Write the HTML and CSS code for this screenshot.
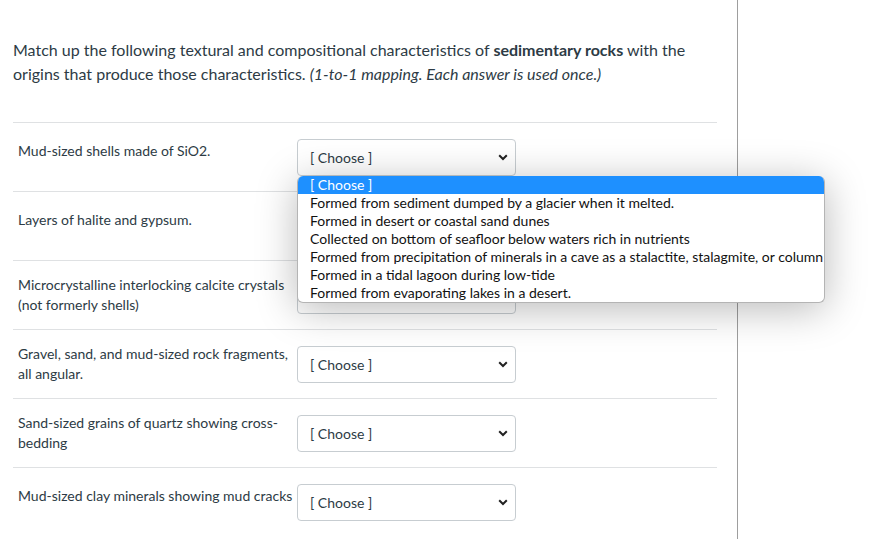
FILE: index.html
```html
<!DOCTYPE html>
<html lang="en">
<head>
    <meta charset="UTF-8">
    <meta name="viewport" content="width=device-width, initial-scale=1.0">
    <title>Matching Question</title>
    <link rel="stylesheet" href="styles.css">
</head>
<body>
    <div class="page">
        <div class="question">
            <p class="prompt">Match up the following textural and compositional characteristics of <strong>sedimentary rocks</strong> with the origins that produce those characteristics. <em>(1-to-1 mapping. Each answer is used once.)</em></p>
            <div class="answers">
                <div class="row">
                    <div class="label">Mud-sized shells made of SiO2.</div>
                    <div class="select-wrap">
                        <div class="select">
                            <span>[ Choose ]</span>
                            <svg class="chevron" width="10" height="7" viewBox="0 0 10 7"><polyline points="1.2,1.3 5,5 8.8,1.3" fill="none" stroke="#222" stroke-width="2"/></svg>
                        </div>
                        <ul class="menu">
                            <li class="active">[ Choose ]</li>
                            <li>Formed from sediment dumped by a glacier when it melted.</li>
                            <li>Formed in desert or coastal sand dunes</li>
                            <li>Collected on bottom of seafloor below waters rich in nutrients</li>
                            <li>Formed from precipitation of minerals in a cave as a stalactite, stalagmite, or column</li>
                            <li>Formed in a tidal lagoon during low-tide</li>
                            <li>Formed from evaporating lakes in a desert.</li>
                        </ul>
                    </div>
                </div>
                <div class="row">
                    <div class="label">Layers of halite and gypsum.</div>
                    <div class="select-wrap">
                        <div class="select">
                            <span>[ Choose ]</span>
                            <svg class="chevron" width="10" height="7" viewBox="0 0 10 7"><polyline points="1.2,1.3 5,5 8.8,1.3" fill="none" stroke="#222" stroke-width="2"/></svg>
                        </div>
                    </div>
                </div>
                <div class="row">
                    <div class="label">Microcrystalline interlocking calcite crystals (not formerly shells)</div>
                    <div class="select-wrap">
                        <div class="select">
                            <span>[ Choose ]</span>
                            <svg class="chevron" width="10" height="7" viewBox="0 0 10 7"><polyline points="1.2,1.3 5,5 8.8,1.3" fill="none" stroke="#222" stroke-width="2"/></svg>
                        </div>
                    </div>
                </div>
                <div class="row">
                    <div class="label">Gravel, sand, and mud-sized rock fragments, all angular.</div>
                    <div class="select-wrap">
                        <div class="select">
                            <span>[ Choose ]</span>
                            <svg class="chevron" width="10" height="7" viewBox="0 0 10 7"><polyline points="1.2,1.3 5,5 8.8,1.3" fill="none" stroke="#222" stroke-width="2"/></svg>
                        </div>
                    </div>
                </div>
                <div class="row">
                    <div class="label">Sand-sized grains of quartz showing cross-bedding</div>
                    <div class="select-wrap">
                        <div class="select">
                            <span>[ Choose ]</span>
                            <svg class="chevron" width="10" height="7" viewBox="0 0 10 7"><polyline points="1.2,1.3 5,5 8.8,1.3" fill="none" stroke="#222" stroke-width="2"/></svg>
                        </div>
                    </div>
                </div>
                <div class="row">
                    <div class="label">Mud-sized clay minerals showing mud cracks</div>
                    <div class="select-wrap">
                        <div class="select">
                            <span>[ Choose ]</span>
                            <svg class="chevron" width="10" height="7" viewBox="0 0 10 7"><polyline points="1.2,1.3 5,5 8.8,1.3" fill="none" stroke="#222" stroke-width="2"/></svg>
                        </div>
                    </div>
                </div>
            </div>
        </div>
    </div>
</body>
</html>
```

FILE: styles.css
```css
body {
    font-family: Lato, "Noto Sans", sans-serif;
    color: #2d3b45;
    background: white;
    margin: 0;
    padding: 0;
}
.page {
    width: 704px;
    min-height: 539px;
    padding: 0 20px 0 13px;
    border-right: 1px solid #9e9e9e;
}
.question {
    padding-top: 38px;
}
.prompt {
    margin: 0 0 36px;
    font-size: 16px;
    line-height: 24px;
}
.row {
    display: flex;
    align-items: center;
    height: 68px;
    border-top: 1px solid #dfe1e3;
}
.label {
    width: 276px;
    padding-left: 5px;
    min-height: 32px;
    font-size: 14px;
    line-height: 20px;
}
.select-wrap {
    position: relative;
    margin-left: 3px;
}
.select {
    display: flex;
    align-items: center;
    justify-content: space-between;
    box-sizing: border-box;
    width: 219px;
    height: 37px;
    padding: 0 7px 0 12px;
    border: 1px solid #c7cdd1;
    border-radius: 4px;
    background: white;
    font-size: 14px;
}
.chevron {
    margin-top: 1px;
}
.menu {
    position: absolute;
    top: 37px;
    left: 0;
    z-index: 2;
    width: 528px;
    margin: 0;
    padding: 0;
    list-style: none;
    background: white;
    border: 1px solid #b4b4b4;
    border-top: none;
    border-radius: 6px;
    box-sizing: border-box;
    overflow: hidden;
    box-shadow: 0 6px 40px rgba(0, 0, 0, 0.28);
    font-size: 14px;
    color: #111;
}
.menu li {
    height: 18px;
    line-height: 18px;
    padding-left: 12px;
    white-space: nowrap;
}
.menu li.active {
    background: #1e90ff;
    color: white;
}
```
